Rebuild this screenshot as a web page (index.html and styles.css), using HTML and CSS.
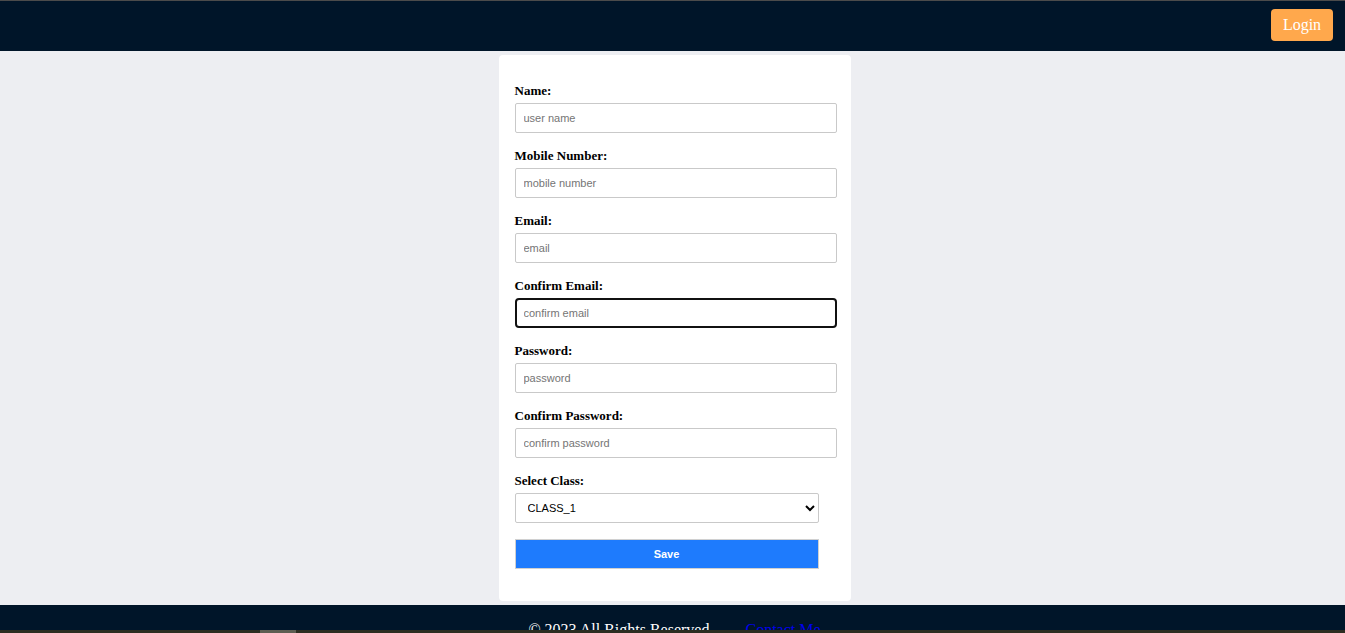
FILE: index.html
```html
<!DOCTYPE html>
<html lang="en">
<head>
    <meta charset="UTF-8">
    <meta name="viewport" content="width=device-width, initial-scale=1.0">
    <title>Register</title>
    <link rel="stylesheet" href="styles.css">
</head>
<body>
<div class="navbar">
    <button class="login">Login</button>
</div>
<div class="main">
    <form class="card">
        <div class="field">
            <label>Name:</label>
            <input type="text" placeholder="user name">
        </div>
        <div class="field">
            <label>Mobile Number:</label>
            <input type="text" placeholder="mobile number">
        </div>
        <div class="field">
            <label>Email:</label>
            <input type="text" placeholder="email">
        </div>
        <div class="field">
            <label>Confirm Email:</label>
            <input type="text" class="active" placeholder="confirm email">
        </div>
        <div class="field">
            <label>Password:</label>
            <input type="password" placeholder="password">
        </div>
        <div class="field">
            <label>Confirm Password:</label>
            <input type="password" placeholder="confirm password">
        </div>
        <div class="field">
            <label>Select Class:</label>
            <select>
                <option>CLASS_1</option>
                <option>CLASS_2</option>
                <option>CLASS_3</option>
            </select>
        </div>
        <button type="button" class="save">Save</button>
    </form>
</div>
<div class="footer">
    <span>© 2023 All Rights Reserved</span>
    <a href="#">Contact Me</a>
</div>
<div class="scrollbar"><div class="thumb"></div></div>
</body>
</html>
```

FILE: styles.css
```css
body {
    margin: 0;
    background-color: #edeef2;
    font-family: "Liberation Serif", "Times New Roman", serif;
}

.navbar {
    height: 42px;
    background-color: #001529;
    border-top: 1px solid #4b4b4b;
    display: flex;
    justify-content: flex-end;
    align-items: flex-start;
    padding: 8px 12px 0 0;
}

.login {
    background-color: #ffa84c;
    color: #fff;
    border: none;
    border-radius: 4px;
    width: 62px;
    height: 32px;
    font-family: "Liberation Serif", serif;
    font-size: 16px;
    cursor: pointer;
}

.main {
    display: flex;
    justify-content: center;
    padding: 4px 0;
}

.card {
    width: 320px;
    background-color: #fff;
    border-radius: 4px;
    padding: 29px 16px 32px 16px;
    margin-left: 4px;
}

.field {
    display: flex;
    flex-direction: column;
    margin-bottom: 16px;
}

.field label {
    font-size: 13px;
    font-weight: bold;
    line-height: 13px;
    margin-bottom: 6px;
}

.field input {
    width: 322px;
    height: 30px;
    box-sizing: border-box;
    border: 1px solid #c9c9c9;
    border-radius: 2px;
    padding: 0 8px;
    font-family: "Liberation Sans", Arial, sans-serif;
    font-size: 11px;
    outline: none;
}
.field input::placeholder {
    color: #757575;
}
.field input.active {
    border: 2px solid #111;
    border-radius: 4px;
    padding: 0 7px;
}

.field select {
    width: 304px;
    height: 30px;
    border: 1px solid #c9c9c9;
    border-radius: 2px;
    background-color: #fff;
    padding: 0 8px;
    font-family: "Liberation Sans", Arial, sans-serif;
    font-size: 11px;
    color: #000;
}

.save {
    display: block;
    width: 304px;
    height: 30px;
    background-color: #1e7bfd;
    color: #fff;
    border: 1px solid #d0d0d0;
    font-family: "Liberation Sans", Arial, sans-serif;
    font-size: 11px;
    font-weight: bold;
    cursor: pointer;
}

.footer {
    background-color: #001529;
    color: #fff;
    font-size: 16px;
    display: flex;
    justify-content: center;
    gap: 36px;
    padding: 16px 0 40px 4px;
}
.footer a {
    color: #0000ee;
}

.scrollbar {
    position: fixed;
    left: 0;
    right: 0;
    bottom: 0;
    height: 3px;
    background-color: #2c2d21;
}
.scrollbar .thumb {
    margin-left: 260px;
    width: 36px;
    height: 3px;
    background-color: #5d5e52;
}
```
